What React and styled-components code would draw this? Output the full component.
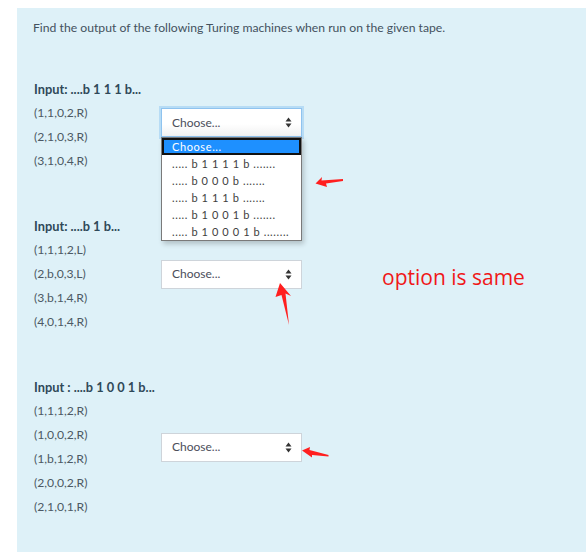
import styled, { createGlobalStyle } from "styled-components";

const GlobalStyle = createGlobalStyle`
  body {
    margin: 0;
    background: #ffffff;
    font-family: Lato, "Open Sans", sans-serif;
  }
`;

const Page = styled.div`
  padding: 8px 0 0 17px;
`;

const Panel = styled.div`
  position: relative;
  background: #def1f8;
  min-height: 544px;
  box-sizing: border-box;
  padding: 8px 16px 20px 16px;
  color: #4c5964;
  font-size: 12.2px;
  line-height: 24px;
`;

const Intro = styled.p`
  margin: 0 0 37px 0;
  color: #44525e;
`;

const Section = styled.div`
  display: flex;
  align-items: center;
  margin-top: ${(p) => p.gap || 0}px;
`;

const Rules = styled.div`
  width: 128px;
  box-sizing: border-box;
  padding-left: 1px;
`;

const Heading = styled.div`
  font-weight: bold;
  font-size: 12.8px;
  color: #2f4959;
`;

const Rule = styled.div``;

const SelectWrap = styled.div`
  position: relative;
  margin-bottom: ${(p) => (p.open ? 5 : 0)}px;
`;

const SelectBox = styled.div`
  width: 141px;
  height: 29px;
  box-sizing: border-box;
  display: flex;
  align-items: center;
  justify-content: space-between;
  padding: 0 9px 0 10px;
  background: ${(p) =>
    p.focused ? "linear-gradient(#ffffff 55%, #f1f1f1)" : "#ffffff"};
  border: 1px solid ${(p) => (p.focused ? "#8fc3ef" : "#ced4da")};
  box-shadow: ${(p) => (p.focused ? "0 0 0 2px #b7dcf5" : "none")};
  color: #4b4e5a;
  font-size: 12px;
`;

const DropList = styled.ul`
  position: absolute;
  top: 29px;
  left: 0;
  width: 141px;
  box-sizing: border-box;
  margin: 0;
  padding: 0;
  list-style: none;
  background: #ffffff;
  border: 1px solid #7a7a7a;
  box-shadow: 2px 3px 5px rgba(0, 0, 0, 0.2);
  z-index: 2;
`;

const Option = styled.li`
  height: 17px;
  line-height: ${(p) => (p.active ? 13 : 17)}px;
  box-sizing: border-box;
  padding-left: ${(p) => (p.active ? 8 : 10)}px;
  font-size: 11px;
  letter-spacing: 0.6px;
  white-space: nowrap;
  color: ${(p) => (p.active ? "#ffffff" : "#3e3e3e")};
  background: ${(p) => (p.active ? "#1e90ff" : "transparent")};
  border: ${(p) => (p.active ? "2px solid #111" : "none")};
`;

const Note = styled.div`
  position: absolute;
  left: 365px;
  top: 254px;
  color: #f01818;
  font-family: "Open Sans", sans-serif;
  font-size: 21px;
  line-height: 30px;
`;

const Arrow = styled.svg`
  position: absolute;
  left: 0;
  top: 0;
  pointer-events: none;
  overflow: visible;
`;

function UpDown() {
  return (
    <svg width="7" height="11" viewBox="0 0 7 11">
      <path d="M3.5 0.5 L6.5 4.5 L0.5 4.5 Z M3.5 10.5 L6.5 6.5 L0.5 6.5 Z" fill="#333" />
    </svg>
  );
}

const options = [
  "Choose...",
  "..... b 1 1 1 1 b .......",
  "..... b 0 0 0 b .......",
  "..... b 1 1 1 b .......",
  "..... b 1 0 0 1 b .......",
  "..... b 1 0 0 0 1 b ........",
];

const questions = [
  {
    title: "Input: ....b 1 1 1 b...",
    rules: ["(1,1,0,2,R)", "(2,1,0,3,R)", "(3,1,0,4,R)"],
    open: true,
  },
  {
    title: "Input: ....b 1 b...",
    rules: ["(1,1,1,2,L)", "(2,b,0,3,L)", "(3,b,1,4,R)", "(4,0,1,4,R)"],
  },
  {
    title: "Input : ....b 1 0 0 1 b...",
    rules: ["(1,1,1,2,R)", "(1,0,0,2,R)", "(1,b,1,2,R)", "(2,0,0,2,R)", "(2,1,0,1,R)"],
  },
];

function Choice({ open }) {
  return (
    <SelectWrap open={open}>
      <SelectBox focused={open}>
        <span>Choose...</span>
        <UpDown />
      </SelectBox>
      {open && (
        <DropList>
          {options.map((o, i) => (
            <Option key={o} active={i === 0}>
              {o}
            </Option>
          ))}
        </DropList>
      )}
    </SelectWrap>
  );
}

export default function App() {
  return (
    <>
      <GlobalStyle />
      <Page>
        <Panel>
          <Intro>
            Find the output of the following Turing machines when run on the
            given tape.
          </Intro>
          {questions.map((q, i) => (
            <Section key={q.title} gap={i === 0 ? 0 : 41}>
              <Rules>
                <Heading>{q.title}</Heading>
                {q.rules.map((r) => (
                  <Rule key={r}>{r}</Rule>
                ))}
              </Rules>
              <Choice open={q.open} />
            </Section>
          ))}
          <Note>option is same</Note>
          <Arrow width="1" height="1">
            <g transform="translate(-17 -8)" fill="#ff1f1f">
              <polygon points="315.5,183.5 322,177 321.5,180.5 343,179 343,181 326,183.5 327,187" />
              <polygon points="280,283 291,296 285.5,293.5 289,325 281.5,295 275.5,297" />
              <polygon points="302,450.5 310,447 309.5,450 328.5,455 328.5,456.5 312,455 312,457.5" />
            </g>
          </Arrow>
        </Panel>
      </Page>
    </>
  );
}
